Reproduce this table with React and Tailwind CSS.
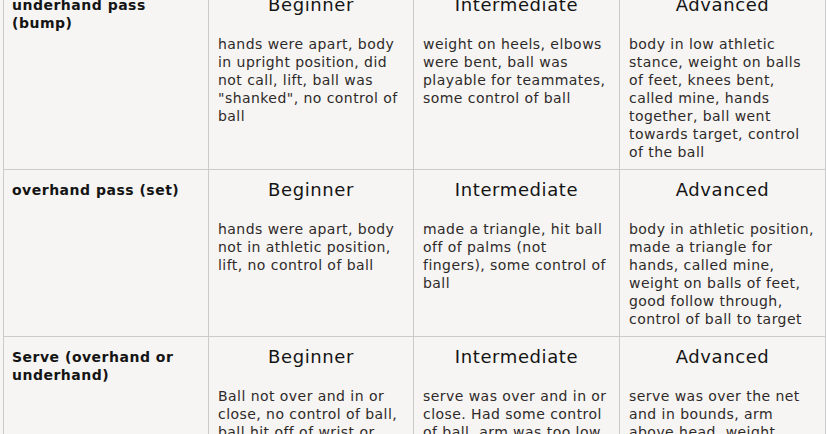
import React from "react";

const rows = [
  {
    label: ["underhand pass", "(bump)"],
    cells: [
      ["hands were apart, body", "in upright position, did", "not call, lift, ball was", "\"shanked\", no control of", "ball"],
      ["weight on heels, elbows", "were bent, ball was", "playable for teammates,", "some control of ball"],
      ["body in low athletic", "stance, weight on balls", "of feet, knees bent,", "called mine, hands", "together, ball went", "towards target, control", "of the ball"],
    ],
  },
  {
    label: ["overhand pass (set)"],
    cells: [
      ["hands were apart, body", "not in athletic position,", "lift, no control of ball"],
      ["made a triangle, hit ball", "off of palms (not", "fingers), some control of", "ball"],
      ["body in athletic position,", "made a triangle for", "hands, called mine,", "weight on balls of feet,", "good follow through,", "control of ball to target"],
    ],
  },
  {
    label: ["Serve (overhand or", "underhand)"],
    cells: [
      ["Ball not over and in or", "close, no control of ball,", "ball hit off of wrist or", "fist, no follow through"],
      ["serve was over and in or", "close. Had some control", "of ball, arm was too low,", "little follow through"],
      ["serve was over the net", "and in bounds, arm", "above head, weight", "transfer, follow through"],
    ],
  },
];

const levels = ["Beginner", "Intermediate", "Advanced"];

function Lines({ lines }) {
  return (
    <>
      {lines.map((l, i) => (
        <React.Fragment key={i}>
          {l}
          {i < lines.length - 1 && <br />}
        </React.Fragment>
      ))}
    </>
  );
}

export default function App() {
  return (
    <div className="w-[826px] h-[434px] overflow-hidden bg-[#f6f5f3]" style={{ fontFamily: '"DejaVu Sans", Verdana, sans-serif' }}>
      <table className="ml-[3px] mt-[-16px] border-collapse table-fixed w-[822px]">
        <colgroup>
          <col className="w-[205px]" />
          <col className="w-[205px]" />
          <col className="w-[206px]" />
          <col className="w-[206px]" />
        </colgroup>
        <tbody>
          {rows.map((r, ri) => (
            <tr key={ri}>
              <td className="border border-[#cbcbcb] align-top pl-[8px] pt-[11px] pb-[8px]">
                <div className="text-[14px] leading-[18px] tracking-[0.5px] font-bold text-[#141414] whitespace-nowrap">
                  <Lines lines={r.label} />
                </div>
              </td>
              {r.cells.map((c, ci) => (
                <td key={ci} className="border border-[#cbcbcb] align-top px-[9px] pt-[9px] pb-[8px]">
                  <div className="text-center text-[18px] leading-[22px] tracking-[0.6px] text-[#141414]">{levels[ci]}</div>
                  <div className="mt-[19px] text-[14px] leading-[18px] tracking-[0.45px] text-[#2f2a2a] whitespace-nowrap">
                    <Lines lines={c} />
                  </div>
                </td>
              ))}
            </tr>
          ))}
        </tbody>
      </table>
    </div>
  );
}
